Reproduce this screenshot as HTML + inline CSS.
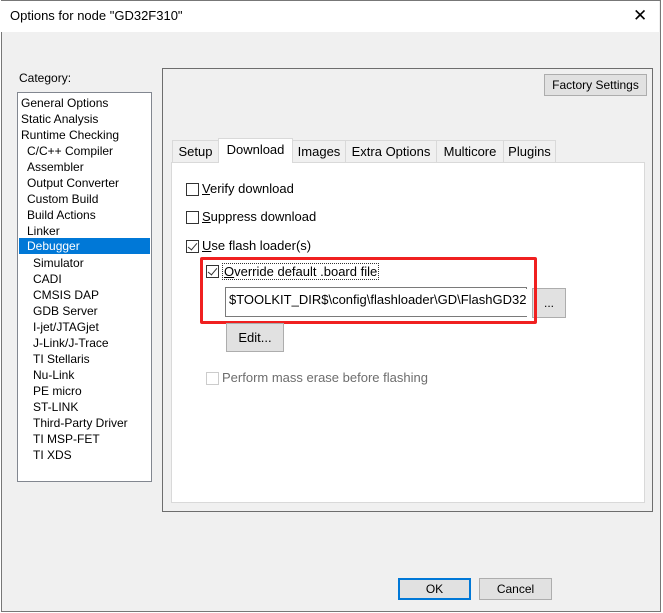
<!DOCTYPE html>
<html><head><style>
*{box-sizing:border-box;margin:0;padding:0}
body{width:663px;height:613px;background:#fff;font-family:"Liberation Sans","Noto Sans CJK SC",sans-serif;font-size:12px;color:#000;position:relative;overflow:hidden}
.a{position:absolute}
.win{left:1px;top:0;width:660px;height:612px;border:1px solid #777;background:#f0f0f0}
.title{left:1px;top:1px;width:658px;height:31px;background:#fff}
.btn{position:absolute;background:#e1e1e1;border:1px solid #adadad;text-align:center}
.cb{position:absolute;width:13px;height:13px;border:1px solid #333;background:#fff}
.cb.ck::after{content:"";position:absolute;left:3px;top:0px;width:4px;height:8px;border:solid #333;border-width:0 1.5px 1.5px 0;transform:rotate(40deg)}
.lbl{position:absolute;font-size:13px;white-space:nowrap}
.tab{position:absolute;top:140px;height:22px;border:1px solid #d9d9d9;border-bottom:none;background:#f0f0f0;font-size:13px;line-height:21px;text-align:center}
.li{position:absolute;left:3px;white-space:nowrap;line-height:16px}
</style></head><body>
<div class="a win"></div>
<div class="a title"></div>
<div class="a" style="left:10px;top:8px;font-size:13px">Options for node "GD32F310"</div>
<div class="a" style="left:633px;top:6px;font-size:17px;font-weight:300">✕</div>

<div class="a" style="left:19px;top:71px">Category:</div>
<div class="a" style="left:17px;top:92px;width:135px;height:390px;background:#fff;border:1px solid #828790">
<div class="li" style="top:2px">General Options</div>
<div class="li" style="top:18px">Static Analysis</div>
<div class="li" style="top:34px">Runtime Checking</div>
<div class="li" style="top:50px;left:9px">C/C++ Compiler</div>
<div class="li" style="top:66px;left:9px">Assembler</div>
<div class="li" style="top:82px;left:9px">Output Converter</div>
<div class="li" style="top:98px;left:9px">Custom Build</div>
<div class="li" style="top:114px;left:9px">Build Actions</div>
<div class="li" style="top:130px;left:9px">Linker</div>
<div class="a" style="left:1px;top:145px;width:131px;height:16px;background:#0078d7"></div>
<div class="li" style="top:145px;left:9px;color:#fff">Debugger</div>
<div class="li" style="top:162px;left:15px">Simulator</div>
<div class="li" style="top:178px;left:15px">CADI</div>
<div class="li" style="top:194px;left:15px">CMSIS DAP</div>
<div class="li" style="top:210px;left:15px">GDB Server</div>
<div class="li" style="top:226px;left:15px">I-jet/JTAGjet</div>
<div class="li" style="top:242px;left:15px">J-Link/J-Trace</div>
<div class="li" style="top:258px;left:15px">TI Stellaris</div>
<div class="li" style="top:274px;left:15px">Nu-Link</div>
<div class="li" style="top:290px;left:15px">PE micro</div>
<div class="li" style="top:306px;left:15px">ST-LINK</div>
<div class="li" style="top:322px;left:15px">Third-Party Driver</div>
<div class="li" style="top:338px;left:15px">TI MSP-FET</div>
<div class="li" style="top:354px;left:15px">TI XDS</div>
</div>

<div class="a" style="left:162px;top:68px;width:491px;height:444px;border:1px solid #6d6d6d;border-right-color:#6d6d6d"></div>
<div class="btn" style="left:544px;top:74px;width:103px;height:22px;line-height:20px">Factory Settings</div>

<div class="a" style="left:171px;top:162px;width:474px;height:341px;background:#fff;border:1px solid #d9d9d9"></div>
<div class="tab" style="left:172px;width:47px">Setup</div>
<div class="tab" style="left:292px;width:54px">Images</div>
<div class="tab" style="left:345px;width:92px">Extra Options</div>
<div class="tab" style="left:436px;width:68px">Multicore</div>
<div class="tab" style="left:503px;width:53px">Plugins</div>
<div class="tab" style="left:218px;top:138px;width:75px;height:25px;background:#fff;line-height:22px">Download</div>

<div class="cb" style="left:186px;top:183px"></div><div class="lbl" style="left:202px;top:181px"><u>V</u>erify download</div>
<div class="cb" style="left:186px;top:211px"></div><div class="lbl" style="left:202px;top:209px"><u>S</u>uppress download</div>
<div class="cb ck" style="left:186px;top:240px"></div><div class="lbl" style="left:202px;top:238px"><u>U</u>se flash loader(s)</div>
<div class="cb ck" style="left:206px;top:265px"></div><div class="lbl" style="left:222px;top:263px;border:1px dotted #333;padding:0 1px;line-height:15px"><u>O</u>verride default .board file</div>
<div class="a" style="left:225px;top:287px;width:302px;height:30px;background:#fff;border:1px solid #7a7a7a"></div>
<div class="lbl" style="left:229px;top:292px">$TOOLKIT_DIR$\config\flashloader\GD\FlashGD32F</div>
<div class="a" style="left:526px;top:289px;width:6px;height:27px;background:#fff"></div>
<div class="btn" style="left:532px;top:288px;width:34px;height:30px;line-height:28px">...</div>
<div class="a" style="left:200px;top:257px;width:337px;height:67px;border:3px solid #f02020;border-radius:2px"></div>
<div class="btn" style="left:226px;top:323px;width:58px;height:29px;line-height:27px;font-size:13px">Edit...</div>
<div class="cb" style="left:206px;top:372px;border-color:#ccc"></div><div class="lbl" style="left:222px;top:370px;color:#6d6d6d">Perform mass erase before flashing</div>

<div class="btn" style="left:398px;top:578px;width:73px;height:22px;line-height:18px;border:2px solid #0078d7">OK</div>
<div class="btn" style="left:479px;top:578px;width:73px;height:22px;line-height:20px">Cancel</div>
</body></html>
